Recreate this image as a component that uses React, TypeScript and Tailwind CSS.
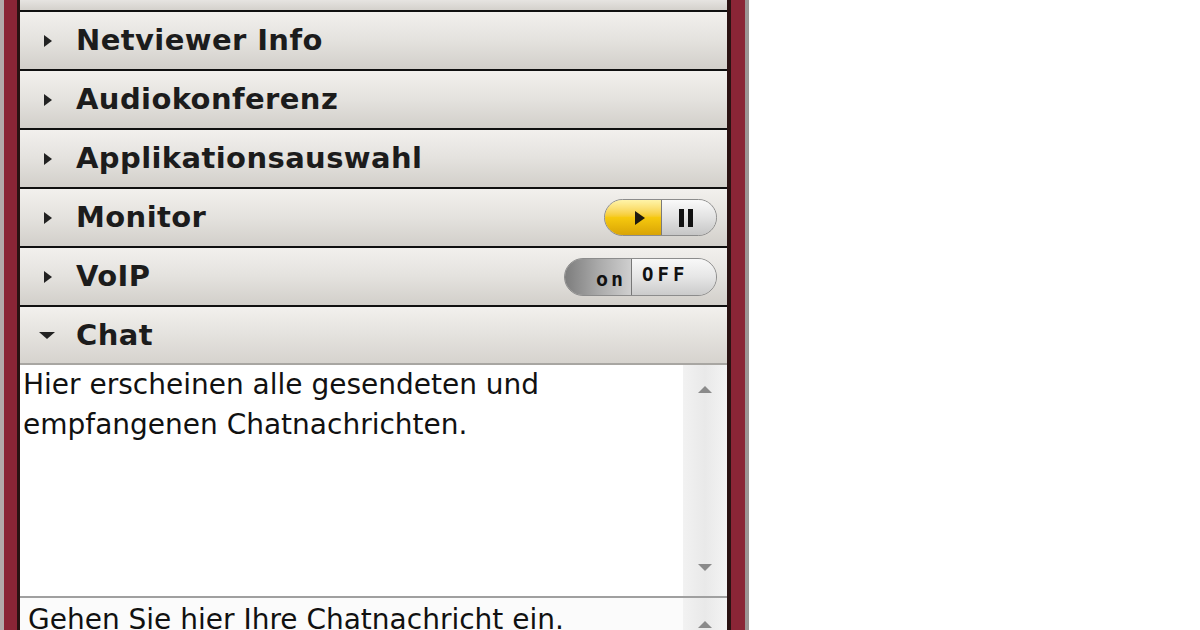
import React from "react";

const headerFont = { fontFamily: '"DejaVu Sans", Verdana, sans-serif' };

// Small dark triangle in front of each section title
function SectionArrow({ open }: { open?: boolean }) {
  if (open) {
    return (
      <svg width="18" height="10" viewBox="0 0 18 10" className="ml-[18px] mr-[20px]">
        <path d="M1 2 L17 2 L9 9 Z" fill="#222" />
      </svg>
    );
  }
  return (
    <svg width="10" height="14" viewBox="0 0 10 14" className="ml-[23px] mr-[23px]">
      <path d="M1 1 L9 7 L1 13 Z" fill="#222" />
    </svg>
  );
}

function PlayPause() {
  return (
    <div className="flex h-[37px] w-[113px] overflow-hidden rounded-full border border-[#8c8c8c] shadow-[inset_0_1px_2px_rgba(0,0,0,0.3)]">
      <div className="flex w-[57px] items-center justify-end bg-gradient-to-b from-[#fff4a8] via-[#f6c90e] to-[#d9a406] pr-[15px] border-r border-[#7a7a7a]">
        <svg width="12" height="16" viewBox="0 0 12 16">
          <path d="M1 1 L11 8 L1 15 Z" fill="#1e1a10" />
        </svg>
      </div>
      <div className="flex flex-1 items-center justify-start gap-[4px] bg-gradient-to-b from-[#fafafa] via-[#e2e2e2] to-[#c6c6c6] pl-[17px]">
        <div className="h-[18px] w-[5px] bg-[#111]" />
        <div className="h-[18px] w-[5px] bg-[#111]" />
      </div>
    </div>
  );
}

function OnOff() {
  const mono = { fontFamily: '"DejaVu Sans Mono", "Liberation Mono", monospace' };
  return (
    <div className="flex h-[38px] w-[153px] overflow-hidden rounded-full border border-[#8c8c8c] shadow-[inset_0_1px_2px_rgba(0,0,0,0.3)]">
      <div className="flex w-[67px] items-center justify-end bg-gradient-to-r from-[#7d7d7d] via-[#a9a9a9] to-[#cfcfcf] pr-[5px] border-r border-[#777]">
        <span style={mono} className="text-[20px] font-bold leading-none tracking-[3px] text-[#111] pt-[4px]">on</span>
      </div>
      <div className="flex flex-1 items-center justify-start bg-gradient-to-b from-[#f8f8f8] via-[#e6e6e6] to-[#cbcbcb] pl-[10px]">
        <span style={mono} className="text-[19px] font-bold leading-none tracking-[4px] text-[#111] pb-[4px]">OFF</span>
      </div>
    </div>
  );
}

function SectionHeader({ title, open, right }: { title: string; open?: boolean; right?: React.ReactNode }) {
  return (
    <div className="flex h-[59px] shrink-0 items-center border-b-2 border-[#101010] bg-gradient-to-b from-[#f2f0ed] via-[#e4e2de] to-[#d2cfca] pr-[10px]">
      <SectionArrow open={open} />
      <span style={headerFont} className="text-[29px] font-bold leading-none text-[#1c1c1c] tracking-[0.4px]">
        {title}
      </span>
      <div className="ml-auto">{right}</div>
    </div>
  );
}

function ScrollArrow({ down }: { down?: boolean }) {
  return (
    <svg width="16" height="9" viewBox="0 0 16 9">
      <path d={down ? "M1 1 L15 1 L8 8 Z" : "M8 1 L15 8 L1 8 Z"} fill="#8a8a8a" />
    </svg>
  );
}

const App = () => {
  const bodyFont = { fontFamily: '"DejaVu Sans", Tahoma, sans-serif' };

  return (
    <div className="flex h-[630px] w-[1200px] overflow-hidden bg-white">
      {/* Left frame */}
      <div className="w-[4px] bg-[#b3abab]" />
      <div className="w-[13px] bg-[#8a2536]" />
      <div className="w-[3px] bg-[#2a1212]" />

      {/* Panel */}
      <div className="flex w-[707px] flex-col overflow-hidden">
        <div className="h-[12px] shrink-0 border-b-2 border-[#101010] bg-gradient-to-b from-[#e6e4e1] to-[#d4d1cc]" />

        <SectionHeader title="Netviewer Info" />
        <SectionHeader title="Audiokonferenz" />
        <SectionHeader title="Applikationsauswahl" />
        <SectionHeader title="Monitor" right={<PlayPause />} />
        <SectionHeader title="VoIP" right={<OnOff />} />

        {/* Chat header */}
        <div className="flex h-[58px] shrink-0 items-center border-b-2 border-[#a8a6a2] bg-gradient-to-b from-[#f2f0ed] via-[#e4e2de] to-[#d6d3ce]">
          <SectionArrow open />
          <span style={headerFont} className="text-[29px] font-bold leading-none text-[#1c1c1c] tracking-[0.4px]">
            Chat
          </span>
        </div>

        {/* Message history */}
        <div className="flex h-[233px] shrink-0 border-b-2 border-[#a0a0a0]">
          <div className="flex-1 bg-white pl-[3px] pt-[0px]">
            <p style={bodyFont} className="text-[28px] leading-[40px] text-[#111]">
              Hier erscheinen alle gesendeten und
              <br />
              empfangenen Chatnachrichten.
            </p>
          </div>
          <div className="flex w-[44px] flex-col items-center justify-between bg-gradient-to-r from-[#f2f2f2] via-[#e9e9e9] to-[#f4f4f4] pt-[20px] pb-[24px]">
            <ScrollArrow />
            <ScrollArrow down />
          </div>
        </div>

        {/* Message input */}
        <div className="flex min-h-0 flex-1 overflow-hidden">
          <div className="flex-1 bg-[#fbfbfb] pl-[8px] pt-[2px]">
            <p style={bodyFont} className="text-[28px] leading-[40px] text-[#111]">
              Gehen Sie hier Ihre Chatnachricht ein.
            </p>
          </div>
          <div className="flex w-[44px] flex-col items-center bg-gradient-to-r from-[#f2f2f2] via-[#e9e9e9] to-[#f4f4f4] pt-[22px]">
            <ScrollArrow />
          </div>
        </div>
      </div>

      {/* Right frame */}
      <div className="w-[4px] bg-[#2a1212]" />
      <div className="w-[14px] bg-[#8a2536]" />
      <div className="w-[4px] bg-[#9c9494]" />
    </div>
  );
};

export default App;
